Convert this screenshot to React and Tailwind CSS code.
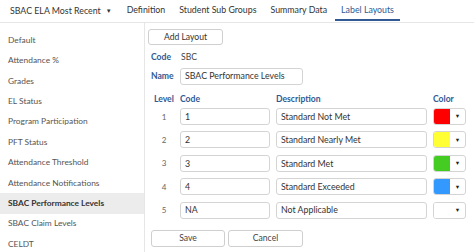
const TABS = ['Definition', 'Student Sub Groups', 'Summary Data', 'Label Layouts']

const ITEMS = [
  'Default',
  'Attendance %',
  'Grades',
  'EL Status',
  'Program Participation',
  'PFT Status',
  'Attendance Threshold',
  'Attendance Notifications',
  'SBAC Performance Levels',
  'SBAC Claim Levels',
  'CELDT',
]

const LEVELS = [
  { level: 1, code: '1', desc: 'Standard Not Met', color: '#ff0000' },
  { level: 2, code: '2', desc: 'Standard Nearly Met', color: '#ffff33' },
  { level: 3, code: '3', desc: 'Standard Met', color: '#44cc22' },
  { level: 4, code: '4', desc: 'Standard Exceeded', color: '#3399ff' },
  { level: 5, code: 'NA', desc: 'Not Applicable', color: '#ffffff' },
]

function Field({ value, className = '' }) {
  return (
    <div className={`flex h-[17px] items-center whitespace-nowrap rounded-[3px] border border-[#d4d4d4] bg-white px-[4px] text-[8.8px] text-[#333] ${className}`}>
      {value}
    </div>
  )
}

export default function App() {
  return (
    <div className="h-[252px] w-[474px] overflow-hidden bg-white text-[#444]" style={{ fontFamily: 'Lato, "Open Sans", sans-serif' }}>
      <header className="flex h-[23px] items-start border-b border-[#e6e6e6] text-[8.8px] text-[#333] whitespace-nowrap">
        <div className="flex h-[21px] items-center gap-[5px] pl-[10px] pr-[9px]">
          SBAC ELA Most Recent
          <span className="text-[6px]">▼</span>
        </div>
        <div className="flex gap-[2px]">
          {TABS.map(t => {
            const active = t === 'Label Layouts'
            return (
              <div
                key={t}
                className={`flex h-[21px] items-center border-b-2 px-[6px] ${active ? 'border-[#2f5a94] text-[#2f5a94]' : 'border-transparent'}`}
              >
                {t}
              </div>
            )
          })}
        </div>
      </header>

      <div className="flex h-[229px]">
        <aside className="w-[145px] shrink-0 border-r border-[#e6e6e6] pt-[7px] text-[8.4px] text-[#555] whitespace-nowrap">
          {ITEMS.map(item => {
            const active = item === 'SBAC Performance Levels'
            return (
              <div
                key={item}
                className={`flex h-[20.4px] items-center pl-[8px] ${active ? 'bg-[#ececec] font-bold text-[#333]' : ''}`}
              >
                {item}
              </div>
            )
          })}
        </aside>

        <main className="flex-1 pl-[3px] pt-[6px] text-[8.6px] whitespace-nowrap">
          <button className="flex h-[16px] w-[75px] items-center justify-center rounded-[3px] border border-[#cfcfcf] bg-white text-[#333]">
            Add Layout
          </button>

          <div className="mt-[4px] flex h-[16px] items-center pl-[3px]">
            <span className="w-[30px] font-bold text-[#2f5a94]">Code</span>
            <span className="text-[#444]">SBC</span>
          </div>

          <div className="mt-[3px] flex h-[16px] items-center pl-[3px]">
            <span className="w-[29px] font-bold text-[#2f5a94]">Name</span>
            <Field value="SBAC Performance Levels" className="h-[16px] w-[123px]" />
          </div>

          <div className="mt-[8px] grid h-[14px] grid-cols-[26px_90px_151px_33px] items-center gap-x-[6px] font-bold text-[#2f5a94]">
            <span className="pl-[6px]">Level</span>
            <span>Code</span>
            <span>Description</span>
            <span>Color</span>
          </div>

          <div className="mt-[2px] grid grid-cols-[26px_90px_151px_33px] gap-x-[6px] gap-y-[6.4px]">
            {LEVELS.map(l => (
              <div key={l.level} className="contents">
                <span className="flex h-[17px] items-center justify-center pl-[6px] text-[8px] text-[#666]">{l.level}</span>
                <Field value={l.code} />
                <Field value={l.desc} />
                <div className="flex h-[17px] overflow-hidden rounded-[3px] border border-[#d4d4d4] bg-white">
                  <div className="w-[16px]" style={{ background: l.color }} />
                  <div className="flex flex-1 items-center justify-center text-[5.5px] text-[#222]">▼</div>
                </div>
              </div>
            ))}
          </div>

          <div className="mt-[11px] flex gap-[3px] pl-[3px]">
            <button className="flex h-[17px] w-[74px] items-center justify-center rounded-[3px] border border-[#cfcfcf] bg-white text-[#444]">Save</button>
            <button className="flex h-[17px] w-[75px] items-center justify-center rounded-[3px] border border-[#cfcfcf] bg-white text-[#444]">Cancel</button>
          </div>
        </main>
      </div>
    </div>
  )
}
